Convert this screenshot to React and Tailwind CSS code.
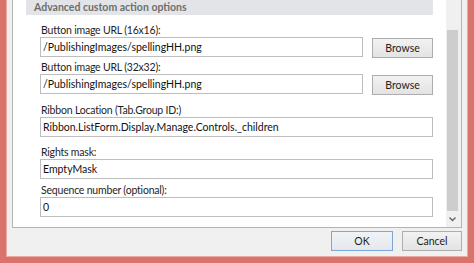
import React from 'react';

const FONT = { fontFamily: 'Lato, "Noto Sans", sans-serif' };

function Field({ label, value, browse, className = '' }) {
    return (
        <div className={className}>
            <div className="h-[14px] text-[10.5px] leading-[15px] tracking-[-0.2px] text-[#1e1e1e] pl-[1px]">{label}</div>
            <div className="flex items-start">
                <div className={`h-[20px] border border-[#bdbdbd] bg-white pl-[2px] text-[10.5px] leading-[18px] text-[#111] ${browse ? 'w-[323px]' : 'w-[393px]'}`}>
                    {value}
                </div>
                {browse && (
                    <button className="ml-[9px] mt-[1px] h-[20px] w-[61px] border border-[#adadad] bg-gradient-to-b from-[#f2f2f2] to-[#e3e3e3] text-[10.5px] leading-[18px] text-[#1e1e1e]">
                        Browse
                    </button>
                )}
            </div>
        </div>
    );
}

export default function App() {
    return (
        <div className="w-[474px] h-[263px] bg-[#d9736b] px-[6px] pb-[6px] flex" style={FONT}>
            <div className="flex-1 flex flex-col bg-[#f0f0f0] border-x border-b border-[#e9aaa4]">
                {/* Scrolling content box */}
                <div className="ml-[5px] mr-[5px] h-[228px] flex border-x border-b border-[#b4b4b4]">
                    <div className="w-[433px] bg-white pl-[13px]">
                        <div className="w-[407px] h-[15px] bg-[#e2e4e7] pl-[8px] text-[10.5px] leading-[15px] font-bold text-[#6e6e6e]">
                            Advanced custom action options
                        </div>
                        <div className="pl-[14px]">
                            <Field className="mt-[8px]" label="Button image URL (16x16):" value="/PublishingImages/spellingHH.png" browse />
                            <Field className="mt-[2px]" label="Button image URL (32x32):" value="/PublishingImages/spellingHH.png" browse />
                            <Field className="mt-[8px]" label="Ribbon Location (Tab.Group ID:)" value="Ribbon.ListForm.Display.Manage.Controls._children" />
                            <Field className="mt-[8px]" label="Rights mask:" value="EmptyMask" />
                            <Field className="mt-[4px]" label="Sequence number (optional):" value="0" />
                        </div>
                    </div>
                    {/* Scrollbar */}
                    <div className="w-[13px] flex flex-col bg-[#f0f0f0]">
                        <div className="h-[30px]" />
                        <div className="mx-[1px] h-[181px] bg-[#cdcdcd]" />
                        <div className="flex-1 flex items-center justify-center">
                            <svg width="7" height="5" viewBox="0 0 7 5">
                                <path d="M0.5 0.5 L3.5 3.5 L6.5 0.5" fill="none" stroke="#606060" strokeWidth="1.3" />
                            </svg>
                        </div>
                    </div>
                </div>
                {/* Footer */}
                <div className="flex justify-end gap-[9px] pt-[3px] pr-[5px]">
                    <button className="h-[20px] w-[62px] border border-[#7aa9d9] bg-gradient-to-b from-[#f0f4f8] to-[#e4e8ec] text-[10.5px] leading-[18px] text-[#1e1e1e]">
                        OK
                    </button>
                    <button className="h-[20px] w-[60px] border border-[#adadad] bg-gradient-to-b from-[#f2f2f2] to-[#e3e3e3] text-[10.5px] leading-[18px] text-[#1e1e1e]">
                        Cancel
                    </button>
                </div>
            </div>
        </div>
    );
}
